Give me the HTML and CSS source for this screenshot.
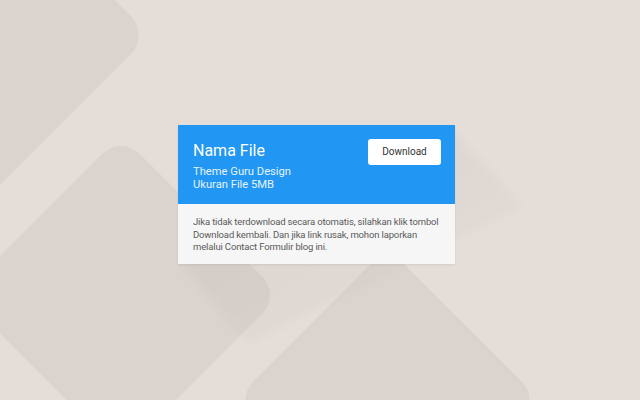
FILE: index.html
```html
<!DOCTYPE html>
<html lang="id">
<head>
    <meta charset="UTF-8">
    <title>Download File</title>
    <link rel="stylesheet" href="styles.css">
</head>
<body>
<svg class="bg" viewBox="0 0 640 400" width="640" height="400">
    <defs>
        <linearGradient id="fade" x1="0" y1="0" x2="1" y2="1">
            <stop offset="0" stop-color="#000" stop-opacity="0.045"/>
            <stop offset="1" stop-color="#000" stop-opacity="0"/>
        </linearGradient>
        <filter id="soft" x="-20%" y="-20%" width="140%" height="140%">
            <feGaussianBlur stdDeviation="5"/>
        </filter>
    </defs>
    <!-- kotak miring di belakang -->
    <rect x="-212" y="-115" width="300" height="300" rx="28" transform="rotate(45 -62 35)" fill="#dbd3cd"/>
    <rect x="8" y="182" width="226" height="226" rx="26" transform="rotate(45 121 295)" fill="#dbd3cd"/>
    <rect x="279.5" y="292" width="216" height="216" rx="26" transform="rotate(45 387.5 400)" fill="#dbd3cd"/>
    <!-- bayangan panjang kartu -->
    <polygon points="450,130 525,205 248,343 180,262" fill="url(#fade)" filter="url(#soft)"/>
</svg>

<div class="page">
    <div class="card">
        <div class="card-head">
            <div class="info">
                <h1>Nama File</h1>
                <p>Theme Guru Design<br>Ukuran File 5MB</p>
            </div>
            <a class="btn" href="#">Download</a>
        </div>
        <div class="card-body">
            <p>Jika tidak terdownload secara otomatis, silahkan klik tombol<br>Download kembali. Dan jika link rusak, mohon laporkan<br>melalui Contact Formulir blog ini.</p>
        </div>
    </div>
</div>
</body>
</html>
```

FILE: styles.css
```css
* {
    padding: 0;
    margin: 0;
    box-sizing: border-box;
}

body {
    background: #e5ddd7;
    font-family: Roboto, "Noto Sans", sans-serif;
    width: 640px;
    height: 400px;
    overflow: hidden;
}

svg.bg {
    position: fixed;
    top: 0;
    left: 0;
    z-index: 0;
}

.page {
    position: relative;
    z-index: 1;
    padding: 125px 0 0 178px;
}

.card {
    width: 277px;
    box-shadow: 0 1px 2px rgba(0, 0, 0, .08);
}

.card-head {
    display: flex;
    justify-content: space-between;
    align-items: flex-start;
    background: #2196f3;
    padding: 15px 14px 13px 15px;
}

.card-head h1 {
    font-size: 16px;
    line-height: 22px;
    font-weight: 400;
    color: #fff;
}

.card-head p {
    margin-top: 4px;
    font-size: 11.2px;
    line-height: 12.5px;
    color: #e6f3fe;
}

.btn {
    display: block;
    width: 73px;
    height: 26px;
    margin-top: -1px;
    line-height: 26px;
    text-align: center;
    background: #fff;
    border-radius: 3px;
    color: #333;
    font-size: 10px;
    text-decoration: none;
}

.card-body {
    background: #f6f6f6;
    padding: 12px 6px 10px 15px;
}

.card-body p {
    font-size: 9.5px;
    letter-spacing: -0.15px;
    line-height: 12.5px;
    color: #5a5a5a;
    white-space: nowrap;
}
```
